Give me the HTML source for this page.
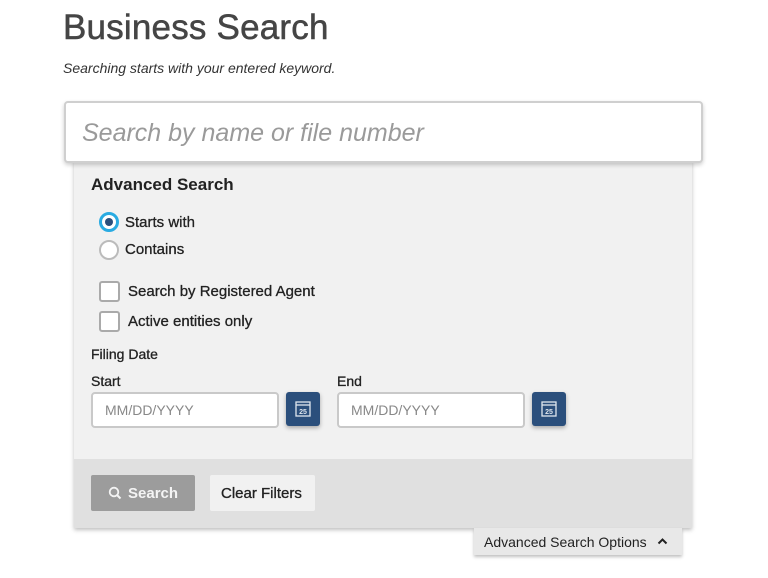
<!DOCTYPE html>
<html><head><style>
body{margin:0;width:768px;height:578px;background:#fff;font-family:"Liberation Sans",sans-serif;position:relative;overflow:hidden;color:#222}
.a{position:absolute}
h1{position:absolute;left:63px;top:8px;margin:0;font-size:35px;font-weight:normal;color:#454545;letter-spacing:0.2px;-webkit-text-stroke:0.5px #454545}
.sub{left:63px;top:60px;font-size:14px;font-style:italic;color:#333}
.panel{left:74px;top:160px;width:618px;height:368px;background:#f1f1f1;box-shadow:0 2px 4px rgba(0,0,0,.25)}
.foot{left:74px;top:459px;width:618px;height:69px;background:#e0e0e0}
.search{left:64px;top:101px;width:635px;height:58px;background:#fff;border:2px solid #cfcfcf;border-radius:4px;box-shadow:0 2px 4px rgba(0,0,0,.2)}
.search span{position:absolute;left:16px;top:16px;font-size:25px;font-style:italic;color:#9a9a9a}
.lbl{font-size:15px;color:#222;-webkit-text-stroke:0.3px #222}
.radio{width:16px;height:16px;border-radius:50%;border:2px solid #bbb;background:#fff}
.cb{width:17px;height:17px;border:2px solid #aaa;border-radius:3px;background:#fff}
.inp{width:184px;height:32px;background:#fff;border:2px solid #c9c9c9;border-radius:4px;font-size:14px;color:#888}
.inp span{position:absolute;left:12px;top:8px}
.cal{width:34px;height:34px;background:#2b4f7c;border-radius:3px;box-shadow:0 2px 4px rgba(0,0,0,.3)}
</style></head><body>
<h1>Business Search</h1>
<div class="a sub">Searching starts with your entered keyword.</div>
<div class="a panel"></div>
<div class="a foot"></div>
<div class="a search"><span>Search by name or file number</span></div>
<div class="a" style="left:91px;top:175px;font-size:17px;font-weight:bold;color:#222">Advanced Search</div>
<div class="a radio" style="left:99px;top:212px;border-color:#29abe2;border-width:3px;width:14px;height:14px"><div class="a" style="left:3px;top:3px;width:8px;height:8px;border-radius:50%;background:#2b4f7c"></div></div>
<div class="a lbl" style="left:125px;top:214px">Starts with</div>
<div class="a radio" style="left:99px;top:240px"></div>
<div class="a lbl" style="left:125px;top:241px">Contains</div>
<div class="a cb" style="left:99px;top:281px"></div>
<div class="a lbl" style="left:128px;top:283px">Search by Registered Agent</div>
<div class="a cb" style="left:99px;top:311px"></div>
<div class="a lbl" style="left:128px;top:313px">Active entities only</div>
<div class="a lbl" style="left:91px;top:346px;font-size:14px">Filing Date</div>
<div class="a lbl" style="left:91px;top:373px;font-size:14px">Start</div>
<div class="a lbl" style="left:337px;top:373px;font-size:14px">End</div>
<div class="a inp" style="left:91px;top:392px"><span>MM/DD/YYYY</span></div>
<div class="a inp" style="left:337px;top:392px"><span>MM/DD/YYYY</span></div>
<div class="a cal" style="left:286px;top:392px"><svg width="34" height="34" viewBox="0 0 34 34"><rect x="10" y="10" width="14" height="14" fill="none" stroke="#dfe6ee" stroke-width="1.3"/><line x1="10" y1="13" x2="24" y2="13" stroke="#dfe6ee" stroke-width="1.3"/><text x="17" y="22" font-size="7" fill="#dfe6ee" text-anchor="middle" font-family="Liberation Sans" font-weight="bold">25</text></svg></div>
<div class="a cal" style="left:532px;top:392px"><svg width="34" height="34" viewBox="0 0 34 34"><rect x="10" y="10" width="14" height="14" fill="none" stroke="#dfe6ee" stroke-width="1.3"/><line x1="10" y1="13" x2="24" y2="13" stroke="#dfe6ee" stroke-width="1.3"/><text x="17" y="22" font-size="7" fill="#dfe6ee" text-anchor="middle" font-family="Liberation Sans" font-weight="bold">25</text></svg></div>
<div class="a" style="left:91px;top:475px;width:104px;height:36px;background:#9c9c9c;border-radius:2px;color:#f4f4f4;font-size:15px;font-weight:bold">
<svg class="a" style="left:17px;top:11px" width="14" height="14" viewBox="0 0 14 14"><circle cx="6" cy="6" r="4.3" fill="none" stroke="#f4f4f4" stroke-width="1.8"/><line x1="9" y1="9" x2="12.5" y2="12.5" stroke="#f4f4f4" stroke-width="2"/></svg>
<span class="a" style="left:37px;top:10px">Search</span></div>
<div class="a" style="left:210px;top:475px;width:105px;height:36px;background:#f1f1f1;border-radius:2px;font-size:15px;color:#222;-webkit-text-stroke:0.3px #222"><span class="a" style="left:11px;top:10px">Clear Filters</span></div>
<div class="a" style="left:474px;top:528px;width:208px;height:27px;background:#e8e8e8;box-shadow:0 2px 3px rgba(0,0,0,.25);font-size:14px;color:#222"><span class="a" style="left:10px;top:6px">Advanced Search Options</span>
<svg class="a" style="left:183px;top:9px" width="11" height="8" viewBox="0 0 11 8"><path d="M1.5 6.5 L5.5 2.5 L9.5 6.5" fill="none" stroke="#222" stroke-width="2"/></svg></div>
</body></html>
